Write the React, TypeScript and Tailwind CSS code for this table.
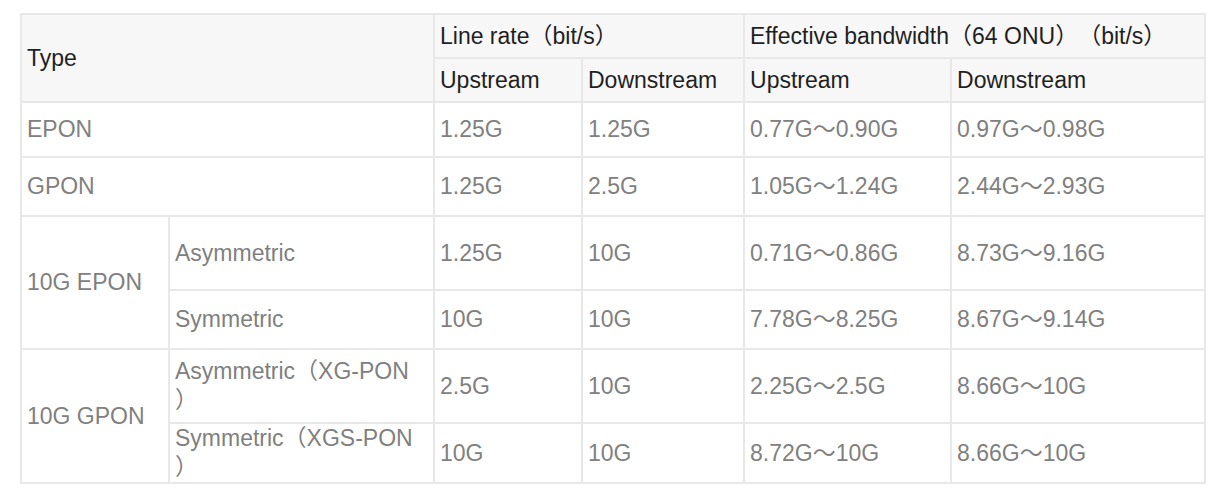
const body = 'border-2 border-[#e8e8e8] pl-[5px] pr-1 py-0 align-middle text-[#808080]';
const head = 'border-2 border-[#e8e8e8] pl-[5px] pr-1 py-0 align-middle text-[#1f1f1f] font-normal text-left';

type Row = {
  group?: string;
  groupSpan?: number;
  sub?: React.ReactNode;
  h: string;
  vals: string[];
};

const rows: Row[] = [
  { group: 'EPON', h: 'h-[55px]', vals: ['1.25G', '1.25G', '0.77G～0.90G', '0.97G～0.98G'] },
  { group: 'GPON', h: 'h-[59px]', vals: ['1.25G', '2.5G', '1.05G～1.24G', '2.44G～2.93G'] },
  { group: '10G EPON', groupSpan: 2, sub: 'Asymmetric', h: 'h-[74px]', vals: ['1.25G', '10G', '0.71G～0.86G', '8.73G～9.16G'] },
  { sub: 'Symmetric', h: 'h-[59px]', vals: ['10G', '10G', '7.78G～8.25G', '8.67G～9.14G'] },
  {
    group: '10G GPON',
    groupSpan: 2,
    sub: (
      <>
        Asymmetric（XG-PON
        <br />）
      </>
    ),
    h: 'h-[74px]',
    vals: ['2.5G', '10G', '2.25G～2.5G', '8.66G～10G'],
  },
  {
    sub: (
      <>
        Symmetric（XGS-PON
        <br />）
      </>
    ),
    h: 'h-[60px]',
    vals: ['10G', '10G', '8.72G～10G', '8.66G～10G'],
  },
];

export default function App() {
  return (
    <div className="min-h-[499px] bg-white pl-[20px] pt-[13px]">
      <table
        className="table-fixed border-collapse w-[1184px] text-[23px] leading-[29px]"
        style={{ fontFamily: '"Liberation Sans", Arial, "Noto Sans CJK SC", sans-serif' }}
      >
        <colgroup>
          <col className="w-[148px]" />
          <col className="w-[265px]" />
          <col className="w-[148px]" />
          <col className="w-[162px]" />
          <col className="w-[207px]" />
          <col className="w-[254px]" />
        </colgroup>
        <thead className="bg-[#f7f7f7]">
          <tr className="h-[44px]">
            <th rowSpan={2} colSpan={2} className={head}>
              Type
            </th>
            <th colSpan={2} className={head}>
              Line rate（bit/s）
            </th>
            <th colSpan={2} className={head}>
              Effective bandwidth（64 ONU）　（bit/s）
            </th>
          </tr>
          <tr className="h-[44px]">
            <th className={head}>Upstream</th>
            <th className={head}>Downstream</th>
            <th className={head}>Upstream</th>
            <th className={head}>Downstream</th>
          </tr>
        </thead>
        <tbody>
          {rows.map((r, i) => (
            <tr key={i} className={r.h}>
              {r.group && !r.sub && (
                <td colSpan={2} className={body}>
                  {r.group}
                </td>
              )}
              {r.group && r.sub && (
                <td rowSpan={r.groupSpan} className={body}>
                  {r.group}
                </td>
              )}
              {r.sub && <td className={body}>{r.sub}</td>}
              {r.vals.map((v, j) => (
                <td key={j} className={body}>
                  {v}
                </td>
              ))}
            </tr>
          ))}
        </tbody>
      </table>
    </div>
  );
}
